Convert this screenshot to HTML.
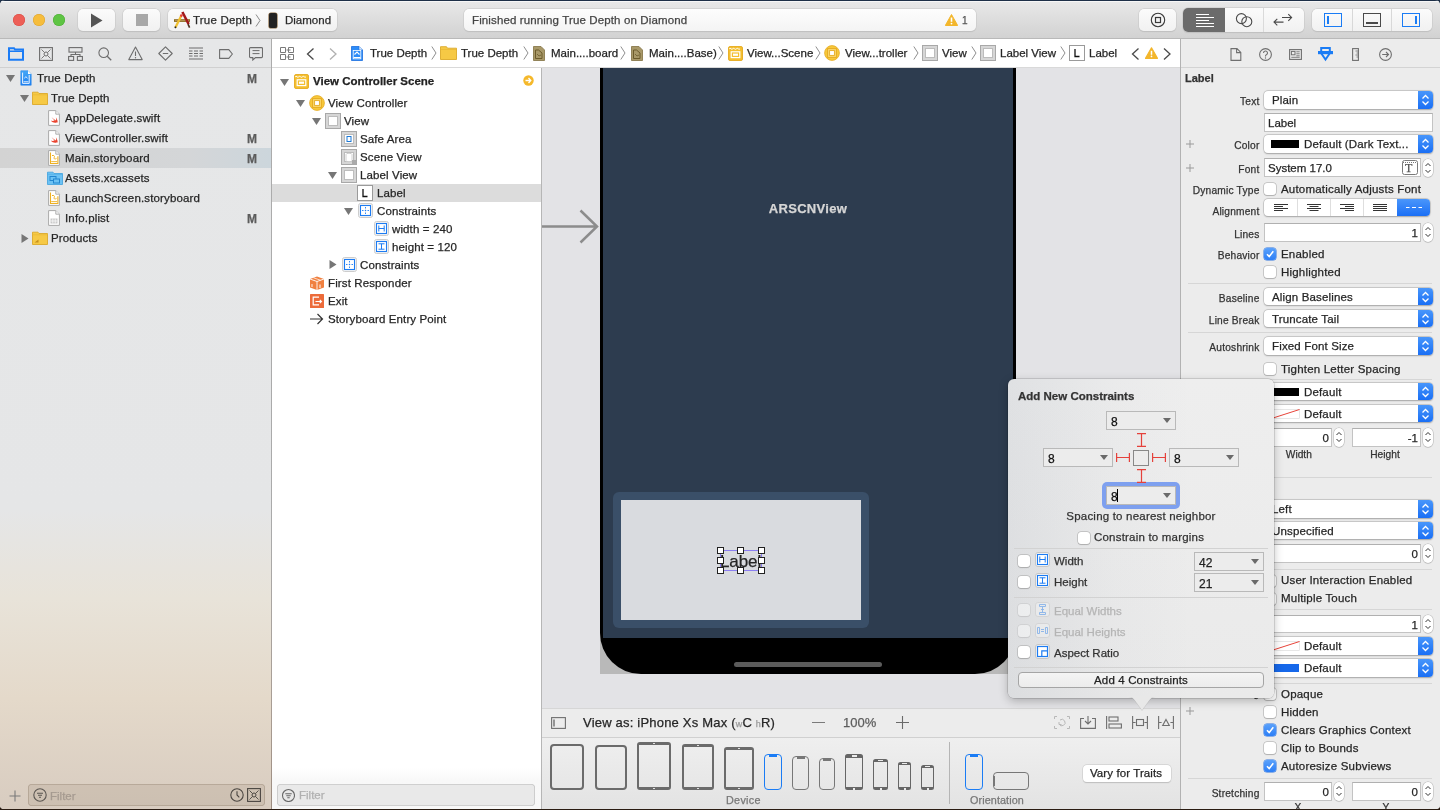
<!DOCTYPE html>
<html><head><meta charset="utf-8">
<style>
*{box-sizing:border-box;margin:0;padding:0}
html,body{width:1440px;height:810px;overflow:hidden;background:linear-gradient(#1d2f47 0,#1d2f47 20px,#2a1c12 790px);font-family:"Liberation Sans",sans-serif;font-size:12px;color:#262626}
.a{position:absolute}
#win{position:absolute;left:0;top:0;width:1440px;height:809px;will-change:transform;background:#ececec;border-radius:5px 5px 4px 4px;overflow:hidden}
#tb{position:absolute;left:0;top:1px;width:1440px;height:38px;background:linear-gradient(#e8e8e8,#d2d2d2);border-bottom:1px solid #b9b9b9;box-shadow:inset 0 1px 0 #f6f6f6}
.btn{position:absolute;background:linear-gradient(#fbfbfb,#f1f1f1);border-radius:5px;box-shadow:0 0 0 0.5px #c8c8c8,0 0.5px 1px #b8b8b8}
.tl{position:absolute;width:12px;height:12px;border-radius:50%}
#nav{position:absolute;left:0;top:39px;width:272px;height:770px;background:linear-gradient(#e6e7e8 0px,#e5e6e7 470px,#e8e3d9 560px,#e4d9ca 660px,#d8ccc0 770px)}
#navline{position:absolute;left:271px;top:0;width:1px;height:770px;background:linear-gradient(#acacac,#aaaaaa 500px,#a89c92 680px,#9c8c80 770px)}
#navbar{position:absolute;left:0;top:0;width:271px;height:29px;border-bottom:1px solid #d0d0d0}
#jump{position:absolute;left:272px;top:39px;width:908px;height:29px;background:#fff;border-bottom:1px solid #d9d9d9}
#outline{position:absolute;left:272px;top:68px;width:270px;height:741px;background:#fff;border-right:1px solid #b6b6b6}
#canvas{position:absolute;left:542px;top:68px;width:638px;height:640px;background:#e3e3e6;overflow:hidden}
#viewas{position:absolute;left:542px;top:708px;width:638px;height:29px;background:#ececec;box-shadow:inset 0 1px 0 #d6d6d6}
#devbar{position:absolute;left:542px;top:737px;width:638px;height:72px;background:#ececec;box-shadow:inset 0 1px 0 #d0d0d0}
#insp{position:absolute;left:1180px;top:39px;width:260px;height:770px;background:#ececec;box-shadow:inset 1px 0 0 #b2b2b2}
.t{position:absolute;white-space:nowrap;font-size:11.5px;line-height:14px;-webkit-text-stroke:0.25px currentColor}
</style></head><body>
<div id="win">
 <div class="a" style="left:0;top:0;width:1440px;height:1px;background:#1d2f47;z-index:5"></div>
 <div id="tb">
  <div class="tl" style="left:13px;top:13px;background:#ed5f57;box-shadow:inset 0 0 0 0.5px #d84a42"></div>
  <div class="tl" style="left:33px;top:13px;background:#f6bd3c;box-shadow:inset 0 0 0 0.5px #dba12f"></div>
  <div class="tl" style="left:53px;top:13px;background:#5ec443;box-shadow:inset 0 0 0 0.5px #4aab34"></div>
  <div class="btn" style="left:78px;top:8px;width:37px;height:22px"><svg class="a" style="left:12px;top:4px" width="13" height="15"><path d="M1 0.5L12.5 7.5L1 14.5Z" fill="#545454"/></svg></div>
  <div class="btn" style="left:123px;top:8px;width:37px;height:22px"><div class="a" style="left:13px;top:5px;width:12px;height:12px;background:#a8a8a8"></div></div>
  <div class="btn" style="left:168px;top:8px;width:169px;height:22px">
   <svg class="a" style="left:5px;top:2px" width="18" height="18" viewBox="0 0 18 18"><rect x="1" y="8.2" width="16" height="2.7" fill="#8d6b1d"/><path d="M2 9.5h14" stroke="#b89a5e" stroke-width="0.8"/><path d="M9.4 1L15.6 13" stroke="#a3191b" stroke-width="2.6"/><path d="M15 13.2l1.6 3.4" stroke="#4a3020" stroke-width="1.6"/><path d="M8.5 4.2L2.4 16.4" stroke="#f0c030" stroke-width="2.3"/><path d="M8.9 3.5L7.8 5.6" stroke="#e8403a" stroke-width="2.4"/><path d="M2.8 15.6L2 17" stroke="#222" stroke-width="1.6"/></svg>
   <div class="t" style="left:25px;top:4px;font-size:11.5px;color:#2b2b2b;letter-spacing:0.2px">True Depth</div>
   <svg class="a" style="left:87px;top:5px" width="6" height="13"><path d="M1 0.5L5 6.5L1 12.5" stroke="#8a8a8a" fill="none" stroke-width="1"/></svg>
   <div class="a" style="left:101px;top:4px;width:8px;height:15px;border-radius:2px;background:#222;box-shadow:0 0 0 0.6px #8a6a40"></div>
   <div class="t" style="left:117px;top:4px;font-size:11.5px;color:#2b2b2b">Diamond</div>
  </div>
  <div class="btn" style="left:464px;top:8px;width:512px;height:22px;background:linear-gradient(#fdfdfd,#f4f4f4)">
   <div class="t" style="left:8px;top:4px;font-size:11.5px;color:#444;letter-spacing:0.13px">Finished running True Depth on Diamond</div>
   <svg class="a" style="left:481px;top:5px" width="13" height="12" viewBox="0 0 13 12"><path d="M6.5 0.5L12.7 11.5H0.3Z" fill="#f3b62b" stroke="#f3b62b" stroke-linejoin="round"/><path d="M6.5 3.5v4.3" stroke="#fff" stroke-width="1.6"/><circle cx="6.5" cy="9.6" r="0.9" fill="#fff"/></svg>
   <div class="t" style="left:498px;top:5px;font-size:10px;color:#555">1</div>
  </div>
  <div class="btn" style="left:1139px;top:8px;width:37px;height:22px"><svg class="a" style="left:11px;top:3px" width="16" height="16"><circle cx="8" cy="8" r="6.7" stroke="#3a3a3a" stroke-width="1.1" fill="none"/><rect x="5.5" y="5.5" width="5" height="5" stroke="#3a3a3a" stroke-width="1.2" fill="none"/></svg></div>
  <div class="btn" style="left:1183px;top:7px;width:121px;height:24px;overflow:hidden">
   <div class="a" style="left:0;top:0;width:42px;height:24px;background:#6b6b6b"></div>
   <svg class="a" style="left:13px;top:6px" width="18" height="14"><path d="M0 0.5h13M0 3.5h18M0 6.5h13M0 9.5h18M0 12.5h18" stroke="#fff" stroke-width="1.1"/></svg>
   <svg class="a" style="left:52px;top:4px" width="18" height="17"><circle cx="6.4" cy="6.6" r="5" stroke="#4a4a4a" fill="none" stroke-width="1.1"/><circle cx="11.8" cy="9.7" r="5" stroke="#4a4a4a" fill="none" stroke-width="1.1"/></svg>
   <div class="a" style="left:80px;top:0;width:1px;height:24px;background:#dadada"></div>
   <svg class="a" style="left:90px;top:5px" width="20" height="14"><path d="M9 4.5h9.5M15.3 1.2l3.3 3.3-3.3 3.3M1 9.1h9.5M4.3 5.8L1 9.1l3.3 3.3" stroke="#4a4a4a" fill="none" stroke-width="1.1"/></svg>
  </div>
  <div class="btn" style="left:1312px;top:8px;width:120px;height:22px">
   <div class="a" style="left:40px;top:0;width:1px;height:22px;background:#d8d8d8"></div>
   <div class="a" style="left:79px;top:0;width:1px;height:22px;background:#d8d8d8"></div>
   <div class="a" style="left:12px;top:4px;width:18px;height:14px;border:1.3px solid #1a7cf5"><div class="a" style="left:2px;top:2px;width:2px;height:8px;background:#1a7cf5"></div></div>
   <div class="a" style="left:51px;top:4px;width:18px;height:14px;border:1.3px solid #4a4a4a"><div class="a" style="left:2px;bottom:2px;width:12px;height:2px;background:#4a4a4a"></div></div>
   <div class="a" style="left:90px;top:4px;width:18px;height:14px;border:1.3px solid #1a7cf5"><div class="a" style="right:2px;top:2px;width:2px;height:8px;background:#1a7cf5"></div></div>
  </div>
 </div>
 <div id="nav"><div id="navline"></div><div class="a" style="left:0;top:745px;width:271px;height:25px">
<svg class="a" style="left:9px;top:6px" width="12" height="12"><path d="M6 0.5v11M0.5 6h11" stroke="#7a7a7a" stroke-width="1.1"/></svg>
<div class="a" style="left:28px;top:0;width:237px;height:22px;border-radius:4px;background:rgba(120,95,70,0.12);box-shadow:inset 0 0 0 0.8px rgba(110,90,70,0.3)">
<svg class="a" style="left:5px;top:4px" width="14" height="14"><circle cx="7" cy="7" r="6.2" fill="none" stroke="#5a5550" stroke-width="1.1"/><path d="M4 5.3h6M5 7.3h4M6 9.3h2" stroke="#5a5550" stroke-width="1.1"/></svg>
<div class="t" style="left:22px;top:5px;font-size:11.5px;color:#a59a90">Filter</div>
<svg class="a" style="left:202px;top:4px" width="14" height="14"><circle cx="7" cy="7" r="6.2" fill="none" stroke="#4a4540" stroke-width="1.1"/><path d="M7 3.3V7l2.3 2.3" fill="none" stroke="#4a4540" stroke-width="1.1"/></svg>
<svg class="a" style="left:219px;top:4px" width="14" height="14"><rect x="0.6" y="0.6" width="12.8" height="12.8" fill="none" stroke="#4a4540" stroke-width="1.1"/><circle cx="7" cy="7" r="2" fill="none" stroke="#4a4540" stroke-width="1"/><path d="M2.5 2.5l3 3M11.5 2.5l-3 3M2.5 11.5l3-3M11.5 11.5l-3-3" stroke="#4a4540" stroke-width="0.9"/></svg>
</div></div><div id="navbar">
  <svg class="a" style="left:8px;top:8px" width="16" height="14" viewBox="0 0 16 14"><path d="M1 1.2h5l1 1.3h8v10.3H1z" fill="none" stroke="#1b7cf6" stroke-width="2"/><path d="M1.5 4.3h13" stroke="#1b7cf6" stroke-width="1.5"/></svg>
  <svg class="a" style="left:39px;top:8px" width="14" height="14" viewBox="0 0 14 14"><rect x="0.6" y="0.6" width="12.8" height="12.8" fill="none" stroke="#6d6d6d" stroke-width="1.1"/><circle cx="7" cy="7" r="2" fill="none" stroke="#6d6d6d" stroke-width="1"/><path d="M2.5 2.5l3 3M11.5 2.5l-3 3M2.5 11.5l3-3M11.5 11.5l-3-3" stroke="#6d6d6d" stroke-width="0.9"/></svg>
  <svg class="a" style="left:68px;top:8px" width="15" height="14" viewBox="0 0 15 14"><rect x="1" y="0.6" width="13" height="4.5" fill="none" stroke="#6d6d6d" stroke-width="1.1"/><rect x="0.6" y="9.5" width="5" height="3.9" fill="none" stroke="#6d6d6d" stroke-width="1.1"/><rect x="9.4" y="9.5" width="5" height="3.9" fill="none" stroke="#6d6d6d" stroke-width="1.1"/><path d="M7.5 5v2.5M3 9.5V7.5h9v2" fill="none" stroke="#6d6d6d" stroke-width="1.1"/></svg>
  <svg class="a" style="left:98px;top:8px" width="14" height="14" viewBox="0 0 14 14"><circle cx="5.7" cy="5.7" r="4.8" fill="none" stroke="#6d6d6d" stroke-width="1.1"/><path d="M9.2 9.2l4 4" stroke="#6d6d6d" stroke-width="1.3"/></svg>
  <svg class="a" style="left:128px;top:7px" width="15" height="15" viewBox="0 0 15 15"><path d="M7.5 1L14.2 13.6H0.8Z" fill="none" stroke="#6d6d6d" stroke-width="1.1" stroke-linejoin="round"/><path d="M7.5 5.5v4.5" stroke="#6d6d6d" stroke-width="1.1"/><circle cx="7.5" cy="11.7" r="0.7" fill="#6d6d6d"/></svg>
  <svg class="a" style="left:158px;top:7px" width="15" height="15" viewBox="0 0 15 15"><path d="M7.5 0.8L14.2 7.5L7.5 14.2L0.8 7.5Z" fill="none" stroke="#6d6d6d" stroke-width="1.1" stroke-linejoin="round"/><path d="M4.8 7.5h5.4" stroke="#6d6d6d" stroke-width="1.1"/></svg>
  <svg class="a" style="left:189px;top:8px" width="14" height="13" viewBox="0 0 14 13"><path d="M0 1h14M0 4h3.5M5 4h4M10.5 4h3.5M0 6.5h3.5M5 6.5h4M10.5 6.5h3.5M0 9h3.5M5 9h4M10.5 9h3.5M0 12h14" stroke="#6d6d6d" stroke-width="1.1"/></svg>
  <svg class="a" style="left:219px;top:10px" width="14" height="10" viewBox="0 0 14 10"><path d="M0.6 0.6h9.2L13.4 5L9.8 9.4H0.6Z" fill="none" stroke="#6d6d6d" stroke-width="1.1" stroke-linejoin="round"/></svg>
  <svg class="a" style="left:249px;top:8px" width="14" height="14" viewBox="0 0 14 14"><path d="M1.5 0.6h11a1 1 0 0 1 1 1v8a1 1 0 0 1-1 1H6.5L3.8 13v-2.4H1.5a1 1 0 0 1-1-1v-8a1 1 0 0 1 1-1z" fill="none" stroke="#6d6d6d" stroke-width="1.1"/><path d="M3.5 3.6h7M3.5 6.6h7" stroke="#6d6d6d" stroke-width="1"/></svg>
 </div><div class="a" style="left:0;top:-39px;width:271px;height:810px"><svg class="a" style="left:6px;top:75px" width="9" height="9"><path d="M0 0h9L4.5 7z" fill="#767676"/></svg><svg class="a" style="left:20px;top:70px" width="12" height="16" viewBox="0 0 12 16"><defs><linearGradient id="pg" x1="0" y1="0" x2="0" y2="1"><stop offset="0" stop-color="#45a8f7"/><stop offset="1" stop-color="#1a7df2"/></linearGradient></defs><path d="M0.8 0.8h7.2l3.2 3.2v11.2H0.8z" fill="url(#pg)" stroke="#2a86ea" stroke-width="0.6"/><path d="M8 0.8v3.2h3.2z" fill="#fff"/><path d="M2.6 2.6v10.8h6.6V5" fill="none" stroke="#fff" stroke-width="0.9"/><path d="M3.6 11.8h4.8" stroke="#fff" stroke-width="0.9"/><path d="M4.3 8.2l1.6-1.5 1.6 1.5" fill="none" stroke="#fff" stroke-width="0.9"/></svg><div class="t" style="left:37px;top:71px;letter-spacing:0.15px">True Depth</div><div class="t" style="left:247px;top:72px;font-weight:bold;color:#5c5c5c;font-size:12px">M</div><svg class="a" style="left:20px;top:95px" width="9" height="9"><path d="M0 0h9L4.5 7z" fill="#767676"/></svg><svg class="a" style="left:32px;top:91px" width="16" height="14" viewBox="0 0 16 14"><path d="M0.5 1.2h5.5l1 1.3h8.5v11H0.5z" fill="#f6c945" stroke="#dba92a" stroke-width="0.9"/><path d="M0.5 3.8h15" stroke="#e9b833" stroke-width="0.7"/></svg><div class="t" style="left:51px;top:91px;letter-spacing:0.15px">True Depth</div><svg class="a" style="left:48px;top:110px" width="13" height="16" viewBox="0 0 13 16"><path d="M0.6 0.6h7.2l3.6 3.6v11.2H0.6z" fill="#fff" stroke="#a9a9a9" stroke-width="1"/><path d="M7.8 0.6v3.6h3.6" fill="#f4f4f4" stroke="#a9a9a9" stroke-width="0.9"/><path d="M2.8 10.8C4.5 12.8 7.5 13.2 9 12.2L9.6 12.8C9.8 11.2 9.4 9.2 7.8 7.2C8.4 8.8 8.3 10 7.9 10.5C6.6 9.8 4.8 8.4 3.5 7.3C4.6 8.6 5.8 9.8 6.6 10.6C5.4 11 4 10.9 2.8 10.8Z" fill="#e9432f"/></svg><div class="t" style="left:65px;top:111px;letter-spacing:0.15px">AppDelegate.swift</div><svg class="a" style="left:48px;top:130px" width="13" height="16" viewBox="0 0 13 16"><path d="M0.6 0.6h7.2l3.6 3.6v11.2H0.6z" fill="#fff" stroke="#a9a9a9" stroke-width="1"/><path d="M7.8 0.6v3.6h3.6" fill="#f4f4f4" stroke="#a9a9a9" stroke-width="0.9"/><path d="M2.8 10.8C4.5 12.8 7.5 13.2 9 12.2L9.6 12.8C9.8 11.2 9.4 9.2 7.8 7.2C8.4 8.8 8.3 10 7.9 10.5C6.6 9.8 4.8 8.4 3.5 7.3C4.6 8.6 5.8 9.8 6.6 10.6C5.4 11 4 10.9 2.8 10.8Z" fill="#e9432f"/></svg><div class="t" style="left:65px;top:131px;letter-spacing:0.15px">ViewController.swift</div><div class="t" style="left:247px;top:132px;font-weight:bold;color:#5c5c5c;font-size:12px">M</div><div class="a" style="left:0;top:148px;width:271px;height:20px;background:linear-gradient(90deg,#d3d3d3,#d4d6d8 70%,#ccd6dc)"></div><svg class="a" style="left:48px;top:150px" width="13" height="16" viewBox="0 0 13 16"><path d="M0.6 0.6h7.2l3.6 3.6v11.2H0.6z" fill="#fff" stroke="#a9a9a9" stroke-width="1"/><path d="M7.8 0.6v3.6h3.6" fill="#f4f4f4" stroke="#a9a9a9" stroke-width="0.9"/><path d="M2.5 2.6v10.9h7.4V6.2" fill="none" stroke="#eeb022" stroke-width="1.1"/><path d="M3.2 11.6h6" stroke="#eeb022" stroke-width="0.9"/><path d="M4 5.6c1.6-0.8 3.2 0.6 2.2 1.9c-0.9 1.1 0.8 2.1 2.3 0.9" fill="none" stroke="#eeb022" stroke-width="1"/></svg><div class="t" style="left:65px;top:151px;letter-spacing:0.15px">Main.storyboard</div><div class="t" style="left:247px;top:152px;font-weight:bold;color:#5c5c5c;font-size:12px">M</div><svg class="a" style="left:47px;top:171px" width="16" height="14" viewBox="0 0 16 14"><path d="M0.5 1.2h5.5l1 1.3h8.5v11H0.5z" fill="#6cc2f4" stroke="#4aa6e0" stroke-width="0.9"/><path d="M0.8 3.3h14.5" stroke="#4aa6e0" stroke-width="0.6"/><rect x="3" y="5.5" width="6" height="4" fill="none" stroke="#2286cf" stroke-width="1"/><rect x="6.5" y="8" width="6" height="4" fill="#6cc2f4" stroke="#2286cf" stroke-width="1"/></svg><div class="t" style="left:65px;top:171px;letter-spacing:0.15px">Assets.xcassets</div><svg class="a" style="left:48px;top:190px" width="13" height="16" viewBox="0 0 13 16"><path d="M0.6 0.6h7.2l3.6 3.6v11.2H0.6z" fill="#fff" stroke="#a9a9a9" stroke-width="1"/><path d="M7.8 0.6v3.6h3.6" fill="#f4f4f4" stroke="#a9a9a9" stroke-width="0.9"/><path d="M2.5 2.6v10.9h7.4V6.2" fill="none" stroke="#eeb022" stroke-width="1.1"/><path d="M3.2 11.6h6" stroke="#eeb022" stroke-width="0.9"/><path d="M4 5.6c1.6-0.8 3.2 0.6 2.2 1.9c-0.9 1.1 0.8 2.1 2.3 0.9" fill="none" stroke="#eeb022" stroke-width="1"/></svg><div class="t" style="left:65px;top:191px;letter-spacing:0.15px">LaunchScreen.storyboard</div><svg class="a" style="left:48px;top:210px" width="13" height="16" viewBox="0 0 13 16"><path d="M0.6 0.6h7.2l3.6 3.6v11.2H0.6z" fill="#fff" stroke="#a9a9a9" stroke-width="1"/><path d="M7.8 0.6v3.6h3.6" fill="#f4f4f4" stroke="#a9a9a9" stroke-width="0.9"/><rect x="2.5" y="8.5" width="7" height="5" fill="#c9c9c9"/><path d="M2.5 11h7M4.8 8.5v5M7.2 8.5v5" stroke="#fff" stroke-width="0.7"/></svg><div class="t" style="left:65px;top:211px;letter-spacing:0.15px">Info.plist</div><div class="t" style="left:247px;top:212px;font-weight:bold;color:#5c5c5c;font-size:12px">M</div><svg class="a" style="left:21px;top:234px" width="8" height="9"><path d="M0.5 0v9L7.5 4.5z" fill="#767676"/></svg><svg class="a" style="left:32px;top:231px" width="16" height="14" viewBox="0 0 16 14"><path d="M0.5 1.2h5.5l1 1.3h8.5v11H0.5z" fill="#f6c945" stroke="#dba92a" stroke-width="0.9"/><path d="M0.5 3.8h15" stroke="#e9b833" stroke-width="0.7"/><path d="M2.5 11.5l4-3v3z" fill="#c4901e"/></svg><div class="t" style="left:51px;top:231px;letter-spacing:0.15px">Products</div></div></div>
 <div id="jump"><div class="a" style="left:0;top:-1px;width:908px;height:29px"><svg class="a" style="left:8px;top:9px" width="14" height="13" viewBox="0 0 14 13"><path d="M0.5 0.5h5v5h-5zM0.5 7.5h5v5h-5zM8.5 7.5h5v5h-5zM8.5 0.5h5v5h-5z" fill="none" stroke="#7a7a7a" stroke-width="1"/><path d="M6.5 3h4M10.5 10h-4" stroke="#7a7a7a" stroke-width="1"/></svg><svg class="a" style="left:34px;top:10px" width="9" height="12"><path d="M7.5 0.5L1.5 6L7.5 11.5" stroke="#4a4a4a" fill="none" stroke-width="1.3"/></svg><svg class="a" style="left:57px;top:10px" width="9" height="12"><path d="M1 0.5L7 6L1 11.5" stroke="#b0b0b0" fill="none" stroke-width="1.3"/></svg><svg class="a" style="left:79px;top:8px" width="12" height="15" viewBox="0 0 12 15"><path d="M0.5 0.5h7.5l3.5 3.5v10.5H0.5z" fill="#2d8cf8" stroke="#1a6fe0" stroke-width="0.8"/><path d="M8 0.5v3.5h3.5" fill="#e8f1fe" stroke="#1a6fe0" stroke-width="0.6"/><path d="M2.5 11.5h7M3.5 8.5l2.5-2.5 2.5 2.5" stroke="#fff" stroke-width="1.1" fill="none"/><rect x="2.2" y="4.5" width="7.6" height="8.3" fill="none" stroke="#fff" stroke-width="0.8"/></svg><div class="t" style="left:98px;top:8px;">True Depth</div><svg class="a" style="left:159px;top:8px" width="6" height="14"><path d="M0.8 0.5L5 7L0.8 13.5" stroke="#8f8f8f" fill="none" stroke-width="1"/></svg><svg class="a" style="left:168px;top:8px" width="17" height="14" viewBox="0 0 17 14"><path d="M0.5 0.7h6l1 1.5h9v11.3H0.5z" fill="#f6c945" stroke="#dba92a" stroke-width="0.9"/><path d="M0.5 3.5h16" stroke="#e9b833" stroke-width="0.7"/></svg><div class="t" style="left:189px;top:8px;">True Depth</div><svg class="a" style="left:251px;top:8px" width="6" height="14"><path d="M0.8 0.5L5 7L0.8 13.5" stroke="#8f8f8f" fill="none" stroke-width="1"/></svg><svg class="a" style="left:261px;top:8px" width="12" height="15" viewBox="0 0 12 15"><path d="M0.5 0.5h7.5l3.5 3.5v10.5H0.5z" fill="#a89868" stroke="#8a7b4e" stroke-width="0.9"/><path d="M2.5 4h3l3.5 3v5.5H2.5z" fill="none" stroke="#6b5a2a" stroke-width="1"/><path d="M4 8l2 2 2-1" fill="none" stroke="#6b5a2a" stroke-width="0.8"/></svg><div class="t" style="left:279px;top:8px;">Main....board</div><svg class="a" style="left:348px;top:8px" width="6" height="14"><path d="M0.8 0.5L5 7L0.8 13.5" stroke="#8f8f8f" fill="none" stroke-width="1"/></svg><svg class="a" style="left:359px;top:8px" width="12" height="15" viewBox="0 0 12 15"><path d="M0.5 0.5h7.5l3.5 3.5v10.5H0.5z" fill="#a89868" stroke="#8a7b4e" stroke-width="0.9"/><path d="M2.5 4h3l3.5 3v5.5H2.5z" fill="none" stroke="#6b5a2a" stroke-width="1"/><path d="M4 8l2 2 2-1" fill="none" stroke="#6b5a2a" stroke-width="0.8"/></svg><div class="t" style="left:377px;top:8px;">Main....Base)</div><svg class="a" style="left:446px;top:8px" width="6" height="14"><path d="M0.8 0.5L5 7L0.8 13.5" stroke="#8f8f8f" fill="none" stroke-width="1"/></svg><svg class="a" style="left:456px;top:8px" width="15" height="15" viewBox="0 0 15 15"><rect x="0.5" y="0.5" width="14" height="14" rx="1.5" fill="#f4bf2f" stroke="#e5aa1f" stroke-width="0.9"/><path d="M1.2 2.8q0.9-1 1.8 0t1.8 0t1.8 0t1.8 0t1.8 0t1.8 0" fill="none" stroke="#fff" stroke-width="1"/><rect x="2.6" y="5.2" width="9.8" height="7" fill="#fff"/><rect x="3.8" y="6.4" width="7.4" height="4.6" fill="#f4bf2f"/><rect x="5" y="7.6" width="5" height="2.2" fill="#fff"/></svg><div class="t" style="left:475px;top:8px;">View...Scene</div><svg class="a" style="left:543px;top:8px" width="6" height="14"><path d="M0.8 0.5L5 7L0.8 13.5" stroke="#8f8f8f" fill="none" stroke-width="1"/></svg><svg class="a" style="left:552px;top:7px" width="16" height="16" viewBox="0 0 16 16"><circle cx="8" cy="8" r="7.4" fill="#f7c83a" stroke="#e6ab22" stroke-width="0.8"/><rect x="3.6" y="3.6" width="8.8" height="8.8" fill="#fbd971" stroke="#e6ab22" stroke-width="1"/><rect x="5.6" y="5.6" width="4.8" height="4.8" fill="#fff" stroke="#e6ab22" stroke-width="0.9"/></svg><div class="t" style="left:573px;top:8px;">View...troller</div><svg class="a" style="left:641px;top:8px" width="6" height="14"><path d="M0.8 0.5L5 7L0.8 13.5" stroke="#8f8f8f" fill="none" stroke-width="1"/></svg><svg class="a" style="left:650px;top:7px" width="16" height="16" viewBox="0 0 16 16"><rect x="0.5" y="0.5" width="15" height="15" fill="#d6d6d6" stroke="#a8a8a8" stroke-width="1"/><rect x="3.5" y="3.5" width="9" height="9" fill="#fff" stroke="#bcbcbc" stroke-width="1"/></svg><div class="t" style="left:670px;top:8px;">View</div><svg class="a" style="left:699px;top:8px" width="6" height="14"><path d="M0.8 0.5L5 7L0.8 13.5" stroke="#8f8f8f" fill="none" stroke-width="1"/></svg><svg class="a" style="left:708px;top:7px" width="16" height="16" viewBox="0 0 16 16"><rect x="0.5" y="0.5" width="15" height="15" fill="#d6d6d6" stroke="#a8a8a8" stroke-width="1"/><rect x="3.5" y="3.5" width="9" height="9" fill="#fff" stroke="#bcbcbc" stroke-width="1"/></svg><div class="t" style="left:728px;top:8px;">Label View</div><svg class="a" style="left:788px;top:8px" width="6" height="14"><path d="M0.8 0.5L5 7L0.8 13.5" stroke="#8f8f8f" fill="none" stroke-width="1"/></svg><svg class="a" style="left:797px;top:7px" width="16" height="16" viewBox="0 0 16 16"><rect x="0.5" y="0.5" width="15" height="15" fill="#fff" stroke="#9a9a9a" stroke-width="1"/><path d="M6 4v7.5h4.5" fill="none" stroke="#111" stroke-width="1.3"/></svg><div class="t" style="left:817px;top:8px;">Label</div><svg class="a" style="left:859px;top:10px" width="9" height="12"><path d="M7.5 0.5L1.5 6L7.5 11.5" stroke="#4a4a4a" fill="none" stroke-width="1.3"/></svg><svg class="a" style="left:873px;top:9px" width="13" height="12" viewBox="0 0 13 12"><path d="M6.5 0.8L12.5 11.3H0.5Z" fill="#f3b62b" stroke="#f3b62b" stroke-linejoin="round" stroke-width="1.2"/><path d="M6.5 3.8v4" stroke="#fff" stroke-width="1.5"/><circle cx="6.5" cy="9.4" r="0.85" fill="#fff"/></svg><svg class="a" style="left:891px;top:10px" width="9" height="12"><path d="M1 0.5L7 6L1 11.5" stroke="#4a4a4a" fill="none" stroke-width="1.3"/></svg></div></div>
 <div id="outline"><div class="a" style="left:0px;top:-1px;width:270px;height:742px"><div class="a" style="left:0;top:701px;width:269px;height:42px;background:linear-gradient(#fff,#f8f8f8 30%,#f7f7f7)"></div>
<div class="a" style="left:5px;top:717px;width:258px;height:22px;border-radius:4px;background:#e9e9e9;box-shadow:inset 0 0 0 0.8px #c6c6c6">
<svg class="a" style="left:4px;top:4px" width="14" height="14"><circle cx="7.5" cy="7.5" r="6" fill="none" stroke="#666" stroke-width="1.1"/><path d="M4.3 5.8h6.4M5.3 7.8h4.4M6.3 9.8h2.4" stroke="#666" stroke-width="1.1"/></svg>
<div class="t" style="left:22px;top:4px;font-size:11.5px;color:#b0b0b0">Filter</div></div><svg class="a" style="left:8px;top:11px" width="9" height="9"><path d="M0 1h9L4.5 8z" fill="#767676"/></svg><svg class="a" style="left:22px;top:7px" width="15" height="15" viewBox="0 0 15 15"><rect x="0.5" y="0.5" width="14" height="14" rx="1.5" fill="#f4bf2f" stroke="#e5aa1f" stroke-width="0.9"/><path d="M1.2 2.8q0.9-1 1.8 0t1.8 0t1.8 0t1.8 0t1.8 0t1.8 0" fill="none" stroke="#fff" stroke-width="1"/><rect x="2.6" y="5.2" width="9.8" height="7" fill="#fff"/><rect x="3.8" y="6.4" width="7.4" height="4.6" fill="#f4bf2f"/><rect x="5" y="7.6" width="5" height="2.2" fill="#fff"/></svg><div class="t" style="left:41px;top:7px;letter-spacing:-0.1px;font-weight:bold;letter-spacing:0px;color:#222">View Controller Scene</div><svg class="a" style="left:251px;top:8px" width="11" height="11" viewBox="0 0 11 11"><circle cx="5.5" cy="5.5" r="5.2" fill="#f5b82a"/><path d="M2.5 5.5h5M5.5 3l2.3 2.5L5.5 8" stroke="#fff" stroke-width="1.3" fill="none"/></svg><svg class="a" style="left:24px;top:32px" width="9" height="9"><path d="M0 1h9L4.5 8z" fill="#767676"/></svg><svg class="a" style="left:37px;top:28px" width="16" height="16" viewBox="0 0 16 16"><circle cx="8" cy="8" r="7.4" fill="#f7c83a" stroke="#e6ab22" stroke-width="0.8"/><rect x="3.6" y="3.6" width="8.8" height="8.8" fill="#fbd971" stroke="#e6ab22" stroke-width="1"/><rect x="5.6" y="5.6" width="4.8" height="4.8" fill="#fff" stroke="#e6ab22" stroke-width="0.9"/></svg><div class="t" style="left:56px;top:29px;letter-spacing:0.12px">View Controller</div><svg class="a" style="left:40px;top:50px" width="9" height="9"><path d="M0 1h9L4.5 8z" fill="#767676"/></svg><svg class="a" style="left:53px;top:46px" width="16" height="16" viewBox="0 0 16 16"><rect x="0.5" y="0.5" width="15" height="15" fill="#d6d6d6" stroke="#a8a8a8" stroke-width="1"/><rect x="3.5" y="3.5" width="9" height="9" fill="#fff" stroke="#bcbcbc" stroke-width="1"/></svg><div class="t" style="left:72px;top:47px;letter-spacing:0.12px">View</div><svg class="a" style="left:69px;top:64px" width="16" height="16" viewBox="0 0 16 16"><rect x="0.5" y="0.5" width="15" height="15" fill="#d6d6d6" stroke="#a8a8a8" stroke-width="1"/><rect x="3.5" y="3.5" width="9" height="9" fill="#fff" stroke="#bcbcbc" stroke-width="1"/><rect x="6" y="5.5" width="4" height="5" fill="none" stroke="#1a78d6" stroke-width="1"/></svg><div class="t" style="left:88px;top:65px;letter-spacing:0.12px">Safe Area</div><svg class="a" style="left:69px;top:82px" width="16" height="16" viewBox="0 0 16 16"><rect x="0.5" y="0.5" width="15" height="15" fill="#d6d6d6" stroke="#a8a8a8" stroke-width="1"/><rect x="3.5" y="3.5" width="9" height="9" fill="#fff" stroke="#bcbcbc" stroke-width="1"/><path d="M5 5.5a3 1.2 0 0 1 6 0v6a3 1.2 0 0 1-6 0z" fill="#fff" stroke="#c4c4c4" stroke-width="0.8"/><rect x="11" y="11" width="4" height="4" fill="#aaa"/></svg><div class="t" style="left:88px;top:83px;letter-spacing:0.12px">Scene View</div><svg class="a" style="left:56px;top:104px" width="9" height="9"><path d="M0 1h9L4.5 8z" fill="#767676"/></svg><svg class="a" style="left:69px;top:100px" width="16" height="16" viewBox="0 0 16 16"><rect x="0.5" y="0.5" width="15" height="15" fill="#d6d6d6" stroke="#a8a8a8" stroke-width="1"/><rect x="3.5" y="3.5" width="9" height="9" fill="#fff" stroke="#bcbcbc" stroke-width="1"/></svg><div class="t" style="left:88px;top:101px;letter-spacing:0.12px">Label View</div><div class="a" style="left:0;top:117px;width:269px;height:18px;background:#dcdcdc"></div><svg class="a" style="left:85px;top:118px" width="16" height="16" viewBox="0 0 16 16"><rect x="0.5" y="0.5" width="15" height="15" fill="#fff" stroke="#9a9a9a" stroke-width="1"/><path d="M6 4v7.5h4.5" fill="none" stroke="#111" stroke-width="1.3"/></svg><div class="t" style="left:105px;top:119px;letter-spacing:0.12px">Label</div><svg class="a" style="left:72px;top:140px" width="9" height="9"><path d="M0 1h9L4.5 8z" fill="#767676"/></svg><svg class="a" style="left:86px;top:136px" width="15" height="15" viewBox="0 0 15 15"><rect x="0.5" y="0.5" width="14" height="14" rx="2" fill="#f4f4f4" stroke="#c8c8c8" stroke-width="0.9"/><rect x="2.5" y="2.5" width="10" height="10" fill="#fff" stroke="#1d7cf2" stroke-width="1.1"/><path d="M7.5 4v1.5M7.5 6.8v1.4M7.5 9.5v1.5M4 7.5h1.5M6.8 7.5h1.4M9.5 7.5h1.5" stroke="#1d7cf2" stroke-width="0.9"/></svg><div class="t" style="left:105px;top:137px;letter-spacing:0.12px">Constraints</div><svg class="a" style="left:102px;top:154px" width="15" height="15" viewBox="0 0 15 15"><rect x="0.5" y="0.5" width="14" height="14" rx="2" fill="#f4f4f4" stroke="#c8c8c8" stroke-width="0.9"/><rect x="2.5" y="2.5" width="10" height="10" fill="#fff" stroke="#1d7cf2" stroke-width="1.1"/><path d="M4.8 4.5v6M10.2 4.5v6M4.8 7.5h5.4" stroke="#1d7cf2" stroke-width="1"/></svg><div class="t" style="left:120px;top:155px;letter-spacing:0.12px">width = 240</div><svg class="a" style="left:102px;top:172px" width="15" height="15" viewBox="0 0 15 15"><rect x="0.5" y="0.5" width="14" height="14" rx="2" fill="#f4f4f4" stroke="#c8c8c8" stroke-width="0.9"/><rect x="2.5" y="2.5" width="10" height="10" fill="#fff" stroke="#1d7cf2" stroke-width="1.1"/><path d="M4.5 4.8h6M4.5 10.2h6M7.5 4.8v5.4" stroke="#1d7cf2" stroke-width="1"/></svg><div class="t" style="left:120px;top:173px;letter-spacing:0.12px">height = 120</div><svg class="a" style="left:57px;top:193px" width="8" height="9"><path d="M0.5 0v9L7.5 4.5z" fill="#767676"/></svg><svg class="a" style="left:70px;top:190px" width="15" height="15" viewBox="0 0 15 15"><rect x="0.5" y="0.5" width="14" height="14" rx="2" fill="#f4f4f4" stroke="#c8c8c8" stroke-width="0.9"/><rect x="2.5" y="2.5" width="10" height="10" fill="#fff" stroke="#1d7cf2" stroke-width="1.1"/><path d="M7.5 4v1.5M7.5 6.8v1.4M7.5 9.5v1.5M4 7.5h1.5M6.8 7.5h1.4M9.5 7.5h1.5" stroke="#1d7cf2" stroke-width="0.9"/></svg><div class="t" style="left:88px;top:191px;letter-spacing:0.12px">Constraints</div><svg class="a" style="left:37px;top:208px" width="16" height="16" viewBox="0 0 16 16"><path d="M1 4L8 1.5L15 4V12.5L8 15L1 12.5Z" fill="#f08040"/><path d="M1 4L8 6.5L15 4M8 6.5V15" stroke="#fff" stroke-width="0.9" fill="none"/><path d="M4.5 2.8L11.5 5.2" stroke="#fff" stroke-width="0.7"/><path d="M11 9.5v3.5" stroke="#fff" stroke-width="1"/><path d="M3 9v3" stroke="#fff" stroke-width="0.9"/></svg><div class="t" style="left:56px;top:209px;letter-spacing:0.12px">First Responder</div><svg class="a" style="left:37px;top:226px" width="16" height="16" viewBox="0 0 16 16"><rect x="1" y="1" width="14" height="14" rx="0.5" fill="#ec6b3a"/><path d="M10 4.2H4.2v7.6H10" stroke="#fff" stroke-width="1.2" fill="none"/><path d="M6.5 8.5h5.5M10.8 6.8l1.7 1.7-1.7 1.7" stroke="#fff" stroke-width="1.1" fill="none"/></svg><div class="t" style="left:56px;top:227px;letter-spacing:0.12px">Exit</div><svg class="a" style="left:38px;top:246px" width="14" height="12"><path d="M0 6h12.5M7.5 1l5 5-5 5" stroke="#333" stroke-width="1.2" fill="none"/></svg><div class="t" style="left:56px;top:245px;letter-spacing:0.12px">Storyboard Entry Point</div></div></div>
 <div id="canvas"><div class="a" style="left:-1px;top:-1px;width:639px;height:641px">
 <div class="a" style="left:0;top:0;width:639px;height:1px;background:#dedede"></div>
 <div class="a" style="left:59px;top:0;width:416px;height:607px;background:#b9b9b9"></div>
 <div class="a" style="left:59px;top:-5px;width:416px;height:612px;background:#000;border-radius:0 0 41px 41px"></div>
 <div class="a" style="left:62px;top:0;width:410px;height:571px;background:#2d3c4f"></div>
 <div class="a" style="left:193px;top:595px;width:148px;height:5px;border-radius:3px;background:#5b5b5b"></div>
 <div class="t" style="left:62px;top:134px;width:410px;text-align:center;font-weight:bold;font-size:13px;line-height:16px;color:#d6d6d6;letter-spacing:0.3px">ARSCNView</div>
 <div class="a" style="left:72px;top:425px;width:256px;height:136px;background:#3a4f68;border-radius:6px"></div>
 <div class="a" style="left:80px;top:433px;width:240px;height:120px;background:#d9dbdf"></div>
 <div class="t" style="left:179px;top:485px;font-size:17px;line-height:20px;color:#262626;letter-spacing:-0.1px">Label</div>
 <div class="a" style="left:179px;top:483px;width:42px;height:21px;border:1px solid #8a7ef0"></div>
 <svg class="a" style="left:176px;top:480px" width="49" height="27"><g fill="#fff" stroke="#222" stroke-width="1"><rect x="0.5" y="0.5" width="6" height="6"/><rect x="20.5" y="0.5" width="6" height="6"/><rect x="41.5" y="0.5" width="6" height="6"/><rect x="0.5" y="10.5" width="6" height="6"/><rect x="41.5" y="10.5" width="6" height="6"/><rect x="0.5" y="20.5" width="6" height="6"/><rect x="20.5" y="20.5" width="6" height="6"/><rect x="41.5" y="20.5" width="6" height="6"/></g></svg>
 <svg class="a" style="left:1px;top:138px" width="58" height="44"><path d="M0 21.5h55M38.5 5.5L55 21.5L38.5 37.5" stroke="#8c8c8c" stroke-width="2.5" fill="none"/></svg>
</div></div>
 <div id="viewas"><div class="a" style="left:-1px;top:-1px;width:639px;height:30px">
<svg class="a" style="left:10px;top:10px" width="15" height="12"><rect x="0.6" y="0.6" width="13.8" height="10.8" fill="none" stroke="#6f6f6f" stroke-width="1.1"/><path d="M3 2.5v7" stroke="#6f6f6f" stroke-width="1.4"/></svg>
<div class="t" style="left:42px;top:8px;font-size:13px;line-height:15px;color:#262626;letter-spacing:0.2px">View as: iPhone Xs Max (<span style="font-size:9px;color:#9a9a9a">w</span>C <span style="font-size:9px;color:#9a9a9a">h</span>R)</div>
<div class="a" style="left:271px;top:15px;width:13px;height:1px;background:#7a7a7a"></div>
<div class="t" style="left:302px;top:8px;font-size:13px;line-height:15px;color:#5e5e5e">100%</div>
<svg class="a" style="left:355px;top:9px" width="13" height="13"><path d="M6.5 0v13M0 6.5h13" stroke="#6a6a6a" stroke-width="1.1"/></svg>
<svg class="a" style="left:513px;top:9px" width="16" height="13" viewBox="0 0 16 13"><path d="M0.5 3V0.5H3M13 0.5h2.5V3M15.5 10v2.5H13M3 12.5H0.5V10" fill="none" stroke="#b8b8b8" stroke-width="1"/><path d="M5 8a3.2 3.2 0 1 0 1-4" fill="none" stroke="#b8b8b8" stroke-width="1"/><path d="M5 6v2.5h2.5" fill="none" stroke="#b8b8b8" stroke-width="1"/></svg>
<svg class="a" style="left:539px;top:9px" width="16" height="13" viewBox="0 0 16 13"><path d="M4 2.5H0.6v9.9h14.8V2.5H12" fill="none" stroke="#6f6f6f" stroke-width="1.1"/><path d="M8 0v8M5 5l3 3 3-3" fill="none" stroke="#6f6f6f" stroke-width="1.1"/></svg>
<svg class="a" style="left:565px;top:9px" width="16" height="13" viewBox="0 0 16 13"><path d="M0.6 0v13" stroke="#6f6f6f" stroke-width="1.1"/><rect x="3" y="1" width="9" height="4" fill="none" stroke="#6f6f6f" stroke-width="1.1"/><rect x="3" y="8" width="12.4" height="4" fill="none" stroke="#6f6f6f" stroke-width="1.1"/></svg>
<svg class="a" style="left:591px;top:9px" width="16" height="13" viewBox="0 0 16 13"><path d="M0.6 0v13M15.4 0v13M0.6 6.5h3M12.4 6.5h3" stroke="#6f6f6f" stroke-width="1.1"/><rect x="4.5" y="3.5" width="7" height="6" fill="none" stroke="#6f6f6f" stroke-width="1.1"/></svg>
<svg class="a" style="left:617px;top:9px" width="16" height="13" viewBox="0 0 16 13"><path d="M0.6 0v13M15.4 0v13M0.6 6.5h3M12.4 6.5h3" stroke="#6f6f6f" stroke-width="1.1"/><path d="M8 3.5l3.3 6H4.7z" fill="none" stroke="#6f6f6f" stroke-width="1.1"/></svg>
</div></div>
 <div id="devbar" style="background:linear-gradient(#efefef,#e3e3e3)"><div class="a" style="left:-1px;top:-1px;width:639px;height:73px">
<div class="a" style="left:9px;top:8px;width:34px;height:46px;border:2px solid #6b6b6b;border-radius:4px"></div>
<div class="a" style="left:54px;top:9px;width:32px;height:45px;border:2px solid #6b6b6b;border-radius:4px"></div>
<div class="a" style="left:96px;top:6px;width:34px;height:48px;border:2px solid #6b6b6b;border-top-width:3px;border-bottom-width:3px;border-radius:3px"><div class="a" style="left:50%;top:-2.3px;width:1.6px;height:1.6px;margin-left:-0.8px;border-radius:1px;background:#f2f2f2"></div><div class="a" style="left:50%;bottom:-2.4px;width:2px;height:1.6px;margin-left:-1px;border-radius:1px;background:#f2f2f2"></div></div>
<div class="a" style="left:141px;top:8px;width:32px;height:46px;border:2px solid #6b6b6b;border-top-width:3px;border-bottom-width:3px;border-radius:3px"><div class="a" style="left:50%;top:-2.3px;width:1.6px;height:1.6px;margin-left:-0.8px;border-radius:1px;background:#f2f2f2"></div><div class="a" style="left:50%;bottom:-2.4px;width:2px;height:1.6px;margin-left:-1px;border-radius:1px;background:#f2f2f2"></div></div>
<div class="a" style="left:183px;top:11px;width:30px;height:43px;border:2px solid #6b6b6b;border-top-width:3px;border-bottom-width:3px;border-radius:3px"><div class="a" style="left:50%;top:-2.3px;width:1.6px;height:1.6px;margin-left:-0.8px;border-radius:1px;background:#f2f2f2"></div><div class="a" style="left:50%;bottom:-2.4px;width:2px;height:1.6px;margin-left:-1px;border-radius:1px;background:#f2f2f2"></div></div>
<div class="a" style="left:223px;top:18px;width:18px;height:36px;border:1.4px solid #1a7cf5;border-radius:4px"><div class="a" style="left:50%;top:0;width:8px;height:2px;margin-left:-4px;background:#1a7cf5"></div></div>
<div class="a" style="left:251px;top:20px;width:17px;height:34px;border:1.1px solid #777;border-radius:4px"><div class="a" style="left:50%;top:0;width:8px;height:2px;margin-left:-4px;background:#777"></div></div>
<div class="a" style="left:278px;top:22px;width:16px;height:32px;border:1.1px solid #777;border-radius:4px"><div class="a" style="left:50%;top:0;width:8px;height:2px;margin-left:-4px;background:#777"></div></div>
<div class="a" style="left:304px;top:18px;width:18px;height:36px;border:1.5px solid #666;border-top-width:4px;border-bottom-width:3.5px;border-radius:2.5px"><div class="a" style="left:50%;top:-2.7px;width:5px;height:1.4px;margin-left:-2.5px;background:#ececec"></div><div class="a" style="left:50%;bottom:-2.75px;width:2px;height:2px;margin-left:-1px;background:#ececec"></div></div>
<div class="a" style="left:332px;top:23px;width:15px;height:31px;border:1.5px solid #666;border-top-width:3px;border-bottom-width:3px;border-radius:2.5px"><div class="a" style="left:50%;top:-2.2px;width:5px;height:1.4px;margin-left:-2.5px;background:#ececec"></div><div class="a" style="left:50%;bottom:-2.5px;width:2px;height:2px;margin-left:-1px;background:#ececec"></div></div>
<div class="a" style="left:357px;top:26px;width:13px;height:28px;border:1.5px solid #666;border-top-width:3px;border-bottom-width:3px;border-radius:2.5px"><div class="a" style="left:50%;top:-2.2px;width:5px;height:1.4px;margin-left:-2.5px;background:#ececec"></div><div class="a" style="left:50%;bottom:-2.5px;width:2px;height:2px;margin-left:-1px;background:#ececec"></div></div>
<div class="a" style="left:380px;top:29px;width:13px;height:25px;border:1.5px solid #666;border-top-width:3px;border-bottom-width:3px;border-radius:2.5px"><div class="a" style="left:50%;top:-2.2px;width:5px;height:1.4px;margin-left:-2.5px;background:#ececec"></div><div class="a" style="left:50%;bottom:-2.5px;width:2px;height:2px;margin-left:-1px;background:#ececec"></div></div>
<div class="t" style="left:185px;top:57px;font-size:10.8px;color:#777;letter-spacing:0.3px">Device</div>
<div class="a" style="left:408px;top:6px;width:1px;height:62px;background:#b5b5b5"></div>
<div class="a" style="left:424px;top:18px;width:18px;height:36px;border:1.4px solid #1a7cf5;border-radius:4px"><div class="a" style="left:50%;top:0;width:8px;height:2px;margin-left:-4px;background:#1a7cf5"></div></div>
<div class="a" style="left:452px;top:36px;width:36px;height:18px;border:1.1px solid #777;border-radius:4px"></div>
<div class="a" style="left:452px;top:40px;width:2px;height:10px;background:#777"></div>
<div class="t" style="left:429px;top:57px;font-size:10.8px;color:#777;letter-spacing:0.1px">Orientation</div>
<div class="btn" style="left:542px;top:29px;width:88px;height:17px;background:#fff;border-radius:4px"><div class="t" style="left:-1px;width:88px;text-align:center;top:1px;font-size:11.5px;color:#262626;letter-spacing:0.1px">Vary for Traits</div></div>
</div></div>
 <div id="insp"><div class="a" style="left:1px;top:28px;width:259px;height:1px;background:#d3d3d3"></div>
<svg class="a" style="left:50px;top:9px" width="12" height="13" viewBox="0 0 12 13"><path d="M1 0.6h6l3.8 3.8v8H1z M6.6 0.6v4h4.2" fill="none" stroke="#6f6f6f" stroke-width="1.1"/></svg>
<svg class="a" style="left:79px;top:9px" width="13" height="13" viewBox="0 0 13 13"><circle cx="6.5" cy="6.5" r="5.9" fill="none" stroke="#6f6f6f" stroke-width="1.1"/><path d="M4.5 5a2 2 0 1 1 2.9 1.8c-0.6 0.3-0.9 0.6-0.9 1.3v0.4" fill="none" stroke="#6f6f6f" stroke-width="1.1"/><circle cx="6.5" cy="10" r="0.65" fill="#6f6f6f"/></svg>
<svg class="a" style="left:109px;top:10px" width="13" height="11" viewBox="0 0 13 11"><rect x="0.6" y="0.6" width="11.8" height="9.8" fill="none" stroke="#6f6f6f" stroke-width="1.1"/><rect x="2.4" y="2.4" width="3.6" height="3.4" fill="none" stroke="#6f6f6f" stroke-width="1"/><path d="M7.3 2.8h3.4M7.3 4.8h3.4M7.3 6.8h3.4M2.3 8.3h8.4" stroke="#6f6f6f" stroke-width="0.9"/></svg>
<svg class="a" style="left:138px;top:8px" width="15" height="15" viewBox="0 0 15 15"><path d="M3.2 1.1h8.6v5.2L7.5 12.6L3.2 6.3z" fill="none" stroke="#1a7cf5" stroke-width="2"/><rect x="0" y="4" width="15" height="3.2" fill="#1a7cf5"/></svg>
<svg class="a" style="left:172px;top:9px" width="7" height="13" viewBox="0 0 7 13"><rect x="0.6" y="0.6" width="5.8" height="11.8" fill="none" stroke="#6f6f6f" stroke-width="1.1"/><path d="M3.5 3h3M4.5 5h2M3.5 7h3M4.5 9h2" stroke="#6f6f6f" stroke-width="0.8"/></svg>
<svg class="a" style="left:199px;top:9px" width="13" height="13" viewBox="0 0 13 13"><circle cx="6.5" cy="6.5" r="5.9" fill="none" stroke="#6f6f6f" stroke-width="1.1"/><path d="M3.2 6.5h6.2M7 4l2.5 2.5L7 9" fill="none" stroke="#6f6f6f" stroke-width="1.1"/></svg><div class="t" style="left:5px;top:32px;font-weight:bold;font-size:11px;color:#333">Label</div><div class="t" style="left:-70.5px;width:150px;text-align:right;top:56px;font-size:10.2px;color:#333;letter-spacing:0.2px;">Text</div><div class="a" style="left:84px;top:52px;width:169px;height:18px;background:#fff;border-radius:4px;box-shadow:0 0 0 0.5px #b0b0b0,0 0.5px 1.5px rgba(0,0,0,0.3);overflow:hidden"><div class="t" style="left:8px;top:2px;font-size:11.5px;color:#262626;letter-spacing:0.15px">Plain</div><div class="a" style="right:0;top:0;width:15px;height:18px;background:linear-gradient(#4896fb,#1a6ff5)"><svg class="a" style="left:3px;top:3px" width="9" height="12" viewBox="0 0 9 12"><path d="M1.5 4.5L4.5 1.5 7.5 4.5M1.5 7.5L4.5 10.5 7.5 7.5" fill="none" stroke="#fff" stroke-width="1.3"/></svg></div></div><div class="a" style="left:84px;top:74px;width:169px;height:19px;background:#fff;border:1px solid #c3c3c3;border-top-color:#b0b0b0"><div class="t" style="left:3px;top:2px;font-size:11.5px;color:#262626">Label</div></div><svg class="a" style="left:6px;top:101px" width="8" height="8"><path d="M4 0v8M0 4h8" stroke="#9a9a9a" stroke-width="1"/></svg><div class="t" style="left:-70.5px;width:150px;text-align:right;top:100px;font-size:10.2px;color:#333;letter-spacing:0.2px;">Color</div><div class="a" style="left:84px;top:96px;width:169px;height:18px;background:#fff;border-radius:4px;box-shadow:0 0 0 0.5px #b0b0b0,0 0.5px 1.5px rgba(0,0,0,0.3);overflow:hidden"><div class="a" style="left:7px;top:5px;width:28px;height:8px;background:#000"></div><div class="t" style="left:40px;top:2px;font-size:11.5px;color:#262626;letter-spacing:0.15px">Default (Dark Text...</div><div class="a" style="right:0;top:0;width:15px;height:18px;background:linear-gradient(#4896fb,#1a6ff5)"><svg class="a" style="left:3px;top:3px" width="9" height="12" viewBox="0 0 9 12"><path d="M1.5 4.5L4.5 1.5 7.5 4.5M1.5 7.5L4.5 10.5 7.5 7.5" fill="none" stroke="#fff" stroke-width="1.3"/></svg></div></div><svg class="a" style="left:6px;top:125px" width="8" height="8"><path d="M4 0v8M0 4h8" stroke="#9a9a9a" stroke-width="1"/></svg><div class="t" style="left:-70.5px;width:150px;text-align:right;top:124px;font-size:10.2px;color:#333;letter-spacing:0.2px;">Font</div><div class="a" style="left:84px;top:119px;width:157px;height:19px;background:#fff;border:1px solid #c3c3c3;border-top-color:#b0b0b0"><div class="t" style="left:3px;top:2px;font-size:11.5px;color:#262626">System 17.0</div></div><div class="a" style="left:222px;top:121px;width:16px;height:15px;border:1.5px solid #7a7a7a;border-radius:2.5px;background:#fff"><div class="a" style="left:0;top:0;width:13px;height:2px;border-bottom:1px dotted #7a7a7a"></div><div class="t" style="left:2px;top:1px;font-family:'Liberation Serif',serif;font-size:12px;line-height:12px;color:#555">T</div></div><div class="a" style="left:243px;top:120px;width:10px;height:18px;background:#fff;border-radius:5px;box-shadow:0 0 0 0.5px #b5b5b5,0 0.5px 1px rgba(0,0,0,0.2)"><svg class="a" style="left:1px;top:2px" width="8" height="14" viewBox="0 0 8 14"><path d="M1.5 5L4 2.5 6.5 5M1.5 9L4 11.5 6.5 9" fill="none" stroke="#333" stroke-width="1"/></svg></div><div class="t" style="left:-70.5px;width:150px;text-align:right;top:145px;font-size:10.2px;color:#333;letter-spacing:0.2px;">Dynamic Type</div><div class="a" style="left:84px;top:144px;width:12px;height:12px;border-radius:3px;background:#fff;box-shadow:0 0 0 0.5px #a8a8a8,0 0.5px 1px rgba(0,0,0,0.2)"></div><div class="t" style="left:101px;top:143px;font-size:11.5px;color:#262626;letter-spacing:0.2px;">Automatically Adjusts Font</div><div class="t" style="left:-70.5px;width:150px;text-align:right;top:166px;font-size:10.2px;color:#333;letter-spacing:0.2px;">Alignment</div><div class="a" style="left:84px;top:160px;width:166px;height:17px;background:#fff;border-radius:4px;box-shadow:0 0 0 0.5px #b0b0b0,0 0.5px 1.5px rgba(0,0,0,0.3);overflow:hidden">
<div class="a" style="left:33px;top:0;width:1px;height:17px;background:#dedede"></div><div class="a" style="left:66px;top:0;width:1px;height:17px;background:#dedede"></div><div class="a" style="left:99px;top:0;width:1px;height:17px;background:#dedede"></div>
<svg class="a" style="left:10px;top:5px" width="14" height="8"><path d="M0 0.5h14M0 2.5h9M0 4.5h14M0 6.5h9" stroke="#333" stroke-width="1"/></svg>
<svg class="a" style="left:43px;top:5px" width="14" height="8"><path d="M0 0.5h14M2.5 2.5h9M0 4.5h14M2.5 6.5h9" stroke="#333" stroke-width="1"/></svg>
<svg class="a" style="left:76px;top:5px" width="14" height="8"><path d="M0 0.5h14M5 2.5h9M0 4.5h14M5 6.5h9" stroke="#333" stroke-width="1"/></svg>
<svg class="a" style="left:109px;top:5px" width="14" height="8"><path d="M0 0.5h14M0 2.5h14M0 4.5h14M0 6.5h14" stroke="#333" stroke-width="1"/></svg>
<div class="a" style="left:133px;top:0;width:33px;height:17px;background:linear-gradient(#4a96fb,#1b6ff5)"><svg class="a" style="left:9px;top:8px" width="16" height="2"><path d="M0 0.5h3.5M6 0.5h4M12.5 0.5h3.5" stroke="#fff" stroke-width="1"/></svg></div></div><div class="t" style="left:-70.5px;width:150px;text-align:right;top:189px;font-size:10.2px;color:#333;letter-spacing:0.2px;">Lines</div><div class="a" style="left:84px;top:184px;width:157px;height:19px;background:#fff;border:1px solid #c3c3c3;border-top-color:#b0b0b0"><div class="t" style="right:2px;top:2px;font-size:11.5px;color:#262626">1</div></div><div class="a" style="left:243px;top:184px;width:10px;height:19px;background:#fff;border-radius:5px;box-shadow:0 0 0 0.5px #b5b5b5,0 0.5px 1px rgba(0,0,0,0.2)"><svg class="a" style="left:1px;top:2px" width="8" height="14" viewBox="0 0 8 14"><path d="M1.5 5L4 2.5 6.5 5M1.5 9L4 11.5 6.5 9" fill="none" stroke="#333" stroke-width="1"/></svg></div><div class="t" style="left:-70.5px;width:150px;text-align:right;top:210px;font-size:10.2px;color:#333;letter-spacing:0.2px;">Behavior</div><div class="a" style="left:84px;top:209px;width:12px;height:12px;border-radius:3px;background:linear-gradient(#5aa1fb,#2c7ef6);box-shadow:0 0 0 0.5px #2a72e0"><svg class="a" style="left:1px;top:1px" width="10" height="10"><path d="M2 5.2L4.2 7.5 8.3 2.3" fill="none" stroke="#fff" stroke-width="1.6"/></svg></div><div class="t" style="left:101px;top:208px;font-size:11.5px;color:#262626;letter-spacing:0.2px;">Enabled</div><div class="a" style="left:84px;top:227px;width:12px;height:12px;border-radius:3px;background:#fff;box-shadow:0 0 0 0.5px #a8a8a8,0 0.5px 1px rgba(0,0,0,0.2)"></div><div class="t" style="left:101px;top:226px;font-size:11.5px;color:#262626;letter-spacing:0.2px;">Highlighted</div><div class="a" style="left:8px;top:244px;width:244px;height:1px;background:#d6d6d6"></div><div class="t" style="left:-70.5px;width:150px;text-align:right;top:253px;font-size:10.2px;color:#333;letter-spacing:0.2px;">Baseline</div><div class="a" style="left:84px;top:249px;width:169px;height:17px;background:#fff;border-radius:4px;box-shadow:0 0 0 0.5px #b0b0b0,0 0.5px 1.5px rgba(0,0,0,0.3);overflow:hidden"><div class="t" style="left:8px;top:2px;font-size:11.5px;color:#262626;letter-spacing:0.15px">Align Baselines</div><div class="a" style="right:0;top:0;width:15px;height:17px;background:linear-gradient(#4896fb,#1a6ff5)"><svg class="a" style="left:3px;top:3px" width="9" height="12" viewBox="0 0 9 12"><path d="M1.5 4.5L4.5 1.5 7.5 4.5M1.5 7.5L4.5 10.5 7.5 7.5" fill="none" stroke="#fff" stroke-width="1.3"/></svg></div></div><div class="t" style="left:-70.5px;width:150px;text-align:right;top:275px;font-size:10.2px;color:#333;letter-spacing:0.2px;">Line Break</div><div class="a" style="left:84px;top:271px;width:169px;height:17px;background:#fff;border-radius:4px;box-shadow:0 0 0 0.5px #b0b0b0,0 0.5px 1.5px rgba(0,0,0,0.3);overflow:hidden"><div class="t" style="left:8px;top:2px;font-size:11.5px;color:#262626;letter-spacing:0.15px">Truncate Tail</div><div class="a" style="right:0;top:0;width:15px;height:17px;background:linear-gradient(#4896fb,#1a6ff5)"><svg class="a" style="left:3px;top:3px" width="9" height="12" viewBox="0 0 9 12"><path d="M1.5 4.5L4.5 1.5 7.5 4.5M1.5 7.5L4.5 10.5 7.5 7.5" fill="none" stroke="#fff" stroke-width="1.3"/></svg></div></div><div class="a" style="left:8px;top:293px;width:244px;height:1px;background:#d6d6d6"></div><div class="t" style="left:-70.5px;width:150px;text-align:right;top:302px;font-size:10.2px;color:#333;letter-spacing:0.2px;">Autoshrink</div><div class="a" style="left:84px;top:298px;width:169px;height:18px;background:#fff;border-radius:4px;box-shadow:0 0 0 0.5px #b0b0b0,0 0.5px 1.5px rgba(0,0,0,0.3);overflow:hidden"><div class="t" style="left:8px;top:2px;font-size:11.5px;color:#262626;letter-spacing:0.15px">Fixed Font Size</div><div class="a" style="right:0;top:0;width:15px;height:18px;background:linear-gradient(#4896fb,#1a6ff5)"><svg class="a" style="left:3px;top:3px" width="9" height="12" viewBox="0 0 9 12"><path d="M1.5 4.5L4.5 1.5 7.5 4.5M1.5 7.5L4.5 10.5 7.5 7.5" fill="none" stroke="#fff" stroke-width="1.3"/></svg></div></div><div class="a" style="left:84px;top:324px;width:12px;height:12px;border-radius:3px;background:#fff;box-shadow:0 0 0 0.5px #a8a8a8,0 0.5px 1px rgba(0,0,0,0.2)"></div><div class="t" style="left:101px;top:323px;font-size:11.5px;color:#262626;letter-spacing:0.2px;">Tighten Letter Spacing</div><div class="a" style="left:8px;top:340px;width:244px;height:1px;background:#d6d6d6"></div><div class="t" style="left:-70.5px;width:150px;text-align:right;top:348px;font-size:10.2px;color:#333;letter-spacing:0.2px;">Highlighted</div><div class="a" style="left:84px;top:344px;width:169px;height:17px;background:#fff;border-radius:4px;box-shadow:0 0 0 0.5px #b0b0b0,0 0.5px 1.5px rgba(0,0,0,0.3);overflow:hidden"><div class="a" style="left:7px;top:5px;width:28px;height:8px;background:#000"></div><div class="t" style="left:40px;top:2px;font-size:11.5px;color:#262626;letter-spacing:0.15px">Default</div><div class="a" style="right:0;top:0;width:15px;height:17px;background:linear-gradient(#4896fb,#1a6ff5)"><svg class="a" style="left:3px;top:3px" width="9" height="12" viewBox="0 0 9 12"><path d="M1.5 4.5L4.5 1.5 7.5 4.5M1.5 7.5L4.5 10.5 7.5 7.5" fill="none" stroke="#fff" stroke-width="1.3"/></svg></div></div><div class="t" style="left:-70.5px;width:150px;text-align:right;top:370px;font-size:10.2px;color:#333;letter-spacing:0.2px;">Shadow</div><div class="a" style="left:84px;top:366px;width:169px;height:17px;background:#fff;border-radius:4px;box-shadow:0 0 0 0.5px #b0b0b0,0 0.5px 1.5px rgba(0,0,0,0.3);overflow:hidden"><svg class="a" style="left:7px;top:4px" width="29" height="10"><rect x="0.5" y="0.5" width="28" height="9" fill="#fff" stroke="#d8d8d8" stroke-width="0.6"/><path d="M0.5 9.5L28.5 0.5" stroke="#e8443a" stroke-width="1"/></svg><div class="t" style="left:40px;top:2px;font-size:11.5px;color:#262626;letter-spacing:0.15px">Default</div><div class="a" style="right:0;top:0;width:15px;height:17px;background:linear-gradient(#4896fb,#1a6ff5)"><svg class="a" style="left:3px;top:3px" width="9" height="12" viewBox="0 0 9 12"><path d="M1.5 4.5L4.5 1.5 7.5 4.5M1.5 7.5L4.5 10.5 7.5 7.5" fill="none" stroke="#fff" stroke-width="1.3"/></svg></div></div><div class="t" style="left:-70.5px;width:150px;text-align:right;top:394px;font-size:10.2px;color:#333;letter-spacing:0.2px;">Shadow Offset</div><div class="a" style="left:84px;top:389px;width:68px;height:19px;background:#fff;border:1px solid #c3c3c3;border-top-color:#b0b0b0"><div class="t" style="right:2px;top:2px;font-size:11.5px;color:#262626">0</div></div><div class="a" style="left:154px;top:389px;width:10px;height:19px;background:#fff;border-radius:5px;box-shadow:0 0 0 0.5px #b5b5b5,0 0.5px 1px rgba(0,0,0,0.2)"><svg class="a" style="left:1px;top:2px" width="8" height="14" viewBox="0 0 8 14"><path d="M1.5 5L4 2.5 6.5 5M1.5 9L4 11.5 6.5 9" fill="none" stroke="#333" stroke-width="1"/></svg></div><div class="a" style="left:172px;top:389px;width:69px;height:19px;background:#fff;border:1px solid #c3c3c3;border-top-color:#b0b0b0"><div class="t" style="right:2px;top:2px;font-size:11.5px;color:#262626">-1</div></div><div class="a" style="left:243px;top:389px;width:10px;height:19px;background:#fff;border-radius:5px;box-shadow:0 0 0 0.5px #b5b5b5,0 0.5px 1px rgba(0,0,0,0.2)"><svg class="a" style="left:1px;top:2px" width="8" height="14" viewBox="0 0 8 14"><path d="M1.5 5L4 2.5 6.5 5M1.5 9L4 11.5 6.5 9" fill="none" stroke="#333" stroke-width="1"/></svg></div><div class="t" style="left:88.79999999999995px;width:60px;text-align:center;top:409px;font-size:10.2px;color:#333">Width</div><div class="t" style="left:175px;width:60px;text-align:center;top:409px;font-size:10.2px;color:#333">Height</div><div class="a" style="left:8px;top:438px;width:244px;height:1px;background:#d6d6d6"></div><div class="t" style="left:5px;top:443px;font-weight:bold;font-size:11px;color:#333">View</div><div class="t" style="left:-70.5px;width:150px;text-align:right;top:465px;font-size:10.2px;color:#333;letter-spacing:0.2px;">Content Mode</div><div class="a" style="left:84px;top:461px;width:169px;height:18px;background:#fff;border-radius:4px;box-shadow:0 0 0 0.5px #b0b0b0,0 0.5px 1.5px rgba(0,0,0,0.3);overflow:hidden"><div class="t" style="left:8px;top:2px;font-size:11.5px;color:#262626;letter-spacing:0.15px">Left</div><div class="a" style="right:0;top:0;width:15px;height:18px;background:linear-gradient(#4896fb,#1a6ff5)"><svg class="a" style="left:3px;top:3px" width="9" height="12" viewBox="0 0 9 12"><path d="M1.5 4.5L4.5 1.5 7.5 4.5M1.5 7.5L4.5 10.5 7.5 7.5" fill="none" stroke="#fff" stroke-width="1.3"/></svg></div></div><div class="t" style="left:-70.5px;width:150px;text-align:right;top:487px;font-size:10.2px;color:#333;letter-spacing:0.2px;">Semantic</div><div class="a" style="left:84px;top:483px;width:169px;height:17px;background:#fff;border-radius:4px;box-shadow:0 0 0 0.5px #b0b0b0,0 0.5px 1.5px rgba(0,0,0,0.3);overflow:hidden"><div class="t" style="left:8px;top:2px;font-size:11.5px;color:#262626;letter-spacing:0.15px">Unspecified</div><div class="a" style="right:0;top:0;width:15px;height:17px;background:linear-gradient(#4896fb,#1a6ff5)"><svg class="a" style="left:3px;top:3px" width="9" height="12" viewBox="0 0 9 12"><path d="M1.5 4.5L4.5 1.5 7.5 4.5M1.5 7.5L4.5 10.5 7.5 7.5" fill="none" stroke="#fff" stroke-width="1.3"/></svg></div></div><div class="t" style="left:-70.5px;width:150px;text-align:right;top:510px;font-size:10.2px;color:#333;letter-spacing:0.2px;">Tag</div><div class="a" style="left:84px;top:505px;width:157px;height:19px;background:#fff;border:1px solid #c3c3c3;border-top-color:#b0b0b0"><div class="t" style="right:2px;top:2px;font-size:11.5px;color:#262626">0</div></div><div class="a" style="left:243px;top:505px;width:10px;height:19px;background:#fff;border-radius:5px;box-shadow:0 0 0 0.5px #b5b5b5,0 0.5px 1px rgba(0,0,0,0.2)"><svg class="a" style="left:1px;top:2px" width="8" height="14" viewBox="0 0 8 14"><path d="M1.5 5L4 2.5 6.5 5M1.5 9L4 11.5 6.5 9" fill="none" stroke="#333" stroke-width="1"/></svg></div><div class="a" style="left:8px;top:530px;width:244px;height:1px;background:#d6d6d6"></div><div class="t" style="left:-70.5px;width:150px;text-align:right;top:536px;font-size:10.2px;color:#333;letter-spacing:0.2px;">Interaction</div><div class="a" style="left:84px;top:536px;width:12px;height:12px;border-radius:3px;background:#fff;box-shadow:0 0 0 0.5px #a8a8a8,0 0.5px 1px rgba(0,0,0,0.2)"></div><div class="t" style="left:101px;top:534px;font-size:11.5px;color:#262626;letter-spacing:0.2px;">User Interaction Enabled</div><div class="a" style="left:84px;top:554px;width:12px;height:12px;border-radius:3px;background:#fff;box-shadow:0 0 0 0.5px #a8a8a8,0 0.5px 1px rgba(0,0,0,0.2)"></div><div class="t" style="left:101px;top:552px;font-size:11.5px;color:#262626;letter-spacing:0.2px;">Multiple Touch</div><div class="a" style="left:8px;top:570px;width:244px;height:1px;background:#d6d6d6"></div><div class="t" style="left:-70.5px;width:150px;text-align:right;top:580px;font-size:10.2px;color:#333;letter-spacing:0.2px;">Alpha</div><div class="a" style="left:84px;top:576px;width:157px;height:18px;background:#fff;border:1px solid #c3c3c3;border-top-color:#b0b0b0"><div class="t" style="right:2px;top:2px;font-size:11.5px;color:#262626">1</div></div><div class="a" style="left:243px;top:576px;width:10px;height:18px;background:#fff;border-radius:5px;box-shadow:0 0 0 0.5px #b5b5b5,0 0.5px 1px rgba(0,0,0,0.2)"><svg class="a" style="left:1px;top:2px" width="8" height="14" viewBox="0 0 8 14"><path d="M1.5 5L4 2.5 6.5 5M1.5 9L4 11.5 6.5 9" fill="none" stroke="#333" stroke-width="1"/></svg></div><div class="t" style="left:-70.5px;width:150px;text-align:right;top:602px;font-size:10.2px;color:#333;letter-spacing:0.2px;">Background</div><div class="a" style="left:84px;top:598px;width:169px;height:18px;background:#fff;border-radius:4px;box-shadow:0 0 0 0.5px #b0b0b0,0 0.5px 1.5px rgba(0,0,0,0.3);overflow:hidden"><svg class="a" style="left:7px;top:4px" width="29" height="10"><rect x="0.5" y="0.5" width="28" height="9" fill="#fff" stroke="#d8d8d8" stroke-width="0.6"/><path d="M0.5 9.5L28.5 0.5" stroke="#e8443a" stroke-width="1"/></svg><div class="t" style="left:40px;top:2px;font-size:11.5px;color:#262626;letter-spacing:0.15px">Default</div><div class="a" style="right:0;top:0;width:15px;height:18px;background:linear-gradient(#4896fb,#1a6ff5)"><svg class="a" style="left:3px;top:3px" width="9" height="12" viewBox="0 0 9 12"><path d="M1.5 4.5L4.5 1.5 7.5 4.5M1.5 7.5L4.5 10.5 7.5 7.5" fill="none" stroke="#fff" stroke-width="1.3"/></svg></div></div><div class="t" style="left:-70.5px;width:150px;text-align:right;top:624px;font-size:10.2px;color:#333;letter-spacing:0.2px;">Tint</div><div class="a" style="left:84px;top:620px;width:169px;height:18px;background:#fff;border-radius:4px;box-shadow:0 0 0 0.5px #b0b0b0,0 0.5px 1.5px rgba(0,0,0,0.3);overflow:hidden"><div class="a" style="left:7px;top:5px;width:28px;height:8px;background:#1668ea"></div><div class="t" style="left:40px;top:2px;font-size:11.5px;color:#262626;letter-spacing:0.15px">Default</div><div class="a" style="right:0;top:0;width:15px;height:18px;background:linear-gradient(#4896fb,#1a6ff5)"><svg class="a" style="left:3px;top:3px" width="9" height="12" viewBox="0 0 9 12"><path d="M1.5 4.5L4.5 1.5 7.5 4.5M1.5 7.5L4.5 10.5 7.5 7.5" fill="none" stroke="#fff" stroke-width="1.3"/></svg></div></div><div class="a" style="left:8px;top:644px;width:244px;height:1px;background:#d6d6d6"></div><div class="t" style="left:-70.5px;width:150px;text-align:right;top:648px;font-size:10.2px;color:#333;letter-spacing:0.2px;">Drawing</div><div class="a" style="left:84px;top:649px;width:12px;height:12px;border-radius:3px;background:#fff;box-shadow:0 0 0 0.5px #a8a8a8,0 0.5px 1px rgba(0,0,0,0.2)"></div><div class="t" style="left:101px;top:648px;font-size:11.5px;color:#262626;letter-spacing:0.2px;">Opaque</div><svg class="a" style="left:6px;top:668px" width="8" height="8"><path d="M4 0v8M0 4h8" stroke="#9a9a9a" stroke-width="1"/></svg><div class="a" style="left:84px;top:667px;width:12px;height:12px;border-radius:3px;background:#fff;box-shadow:0 0 0 0.5px #a8a8a8,0 0.5px 1px rgba(0,0,0,0.2)"></div><div class="t" style="left:101px;top:666px;font-size:11.5px;color:#262626;letter-spacing:0.2px;">Hidden</div><div class="a" style="left:84px;top:685px;width:12px;height:12px;border-radius:3px;background:linear-gradient(#5aa1fb,#2c7ef6);box-shadow:0 0 0 0.5px #2a72e0"><svg class="a" style="left:1px;top:1px" width="10" height="10"><path d="M2 5.2L4.2 7.5 8.3 2.3" fill="none" stroke="#fff" stroke-width="1.6"/></svg></div><div class="t" style="left:101px;top:684px;font-size:11.5px;color:#262626;letter-spacing:0.2px;">Clears Graphics Context</div><div class="a" style="left:84px;top:703px;width:12px;height:12px;border-radius:3px;background:#fff;box-shadow:0 0 0 0.5px #a8a8a8,0 0.5px 1px rgba(0,0,0,0.2)"></div><div class="t" style="left:101px;top:702px;font-size:11.5px;color:#262626;letter-spacing:0.2px;">Clip to Bounds</div><div class="a" style="left:84px;top:721px;width:12px;height:12px;border-radius:3px;background:linear-gradient(#5aa1fb,#2c7ef6);box-shadow:0 0 0 0.5px #2a72e0"><svg class="a" style="left:1px;top:1px" width="10" height="10"><path d="M2 5.2L4.2 7.5 8.3 2.3" fill="none" stroke="#fff" stroke-width="1.6"/></svg></div><div class="t" style="left:101px;top:720px;font-size:11.5px;color:#262626;letter-spacing:0.2px;">Autoresize Subviews</div><div class="a" style="left:8px;top:739px;width:244px;height:1px;background:#d6d6d6"></div><div class="t" style="left:-70.5px;width:150px;text-align:right;top:748px;font-size:10.2px;color:#333;letter-spacing:0.2px;">Stretching</div><div class="a" style="left:84px;top:743px;width:68px;height:19px;background:#fff;border:1px solid #c3c3c3;border-top-color:#b0b0b0"><div class="t" style="right:2px;top:2px;font-size:11.5px;color:#262626">0</div></div><div class="a" style="left:154px;top:743px;width:10px;height:19px;background:#fff;border-radius:5px;box-shadow:0 0 0 0.5px #b5b5b5,0 0.5px 1px rgba(0,0,0,0.2)"><svg class="a" style="left:1px;top:2px" width="8" height="14" viewBox="0 0 8 14"><path d="M1.5 5L4 2.5 6.5 5M1.5 9L4 11.5 6.5 9" fill="none" stroke="#333" stroke-width="1"/></svg></div><div class="a" style="left:172px;top:743px;width:69px;height:19px;background:#fff;border:1px solid #c3c3c3;border-top-color:#b0b0b0"><div class="t" style="right:2px;top:2px;font-size:11.5px;color:#262626">0</div></div><div class="a" style="left:243px;top:743px;width:10px;height:19px;background:#fff;border-radius:5px;box-shadow:0 0 0 0.5px #b5b5b5,0 0.5px 1px rgba(0,0,0,0.2)"><svg class="a" style="left:1px;top:2px" width="8" height="14" viewBox="0 0 8 14"><path d="M1.5 5L4 2.5 6.5 5M1.5 9L4 11.5 6.5 9" fill="none" stroke="#333" stroke-width="1"/></svg></div><div class="t" style="left:118px;top:762px;font-size:10.2px;color:#333;transform:translateX(-50%)">X</div><div class="t" style="left:206px;top:762px;font-size:10.2px;color:#333;transform:translateX(-50%)">Y</div></div>
<div class="a" style="left:1008px;top:379px;width:266px;height:319px;border-radius:6px;background:linear-gradient(90deg,rgba(40,60,90,0.075),rgba(40,60,90,0.02) 40%,rgba(0,0,0,0) 70%),linear-gradient(#eeeeee,#eaeaea);box-shadow:0 0 0 0.5px rgba(0,0,0,0.22),0 3px 10px rgba(0,0,0,0.25)">
<svg class="a" style="left:119px;top:317px" width="30" height="16"><path d="M0 0.5C3 0.5 5 1.5 7 3.5L15 14.5L23 3.5C25 1.5 27 0.5 30 0.5Z" fill="#e8e8e8"/><path d="M0 0.5C3 0.5 5 1.5 7 3.5L15 14.5L23 3.5C25 1.5 27 0.5 30 0.5" fill="none" stroke="rgba(0,0,0,0.12)" stroke-width="0.7"/><rect x="0" y="0" width="30" height="1.2" fill="#e8e8e8"/></svg>
<div class="t" style="left:10px;top:10px;font-weight:bold;font-size:11.5px;color:#333">Add New Constraints</div>
<div class="a" style="left:98px;top:32px;width:70px;height:19px;border:1px solid #b9b9b9;background:#ececec"><div class="t" style="left:4px;top:2px;font-size:12px;line-height:16px;color:#111">8</div><svg class="a" style="right:4px;top:6px" width="8" height="5"><path d="M0 0h8L4 5z" fill="#6a6a6a"/></svg></div>
<div class="a" style="left:35px;top:69px;width:70px;height:19px;border:1px solid #b9b9b9;background:#ececec"><div class="t" style="left:4px;top:2px;font-size:12px;line-height:16px;color:#111">8</div><svg class="a" style="right:4px;top:6px" width="8" height="5"><path d="M0 0h8L4 5z" fill="#6a6a6a"/></svg></div>
<div class="a" style="left:161px;top:69px;width:70px;height:19px;border:1px solid #b9b9b9;background:#ececec"><div class="t" style="left:4px;top:2px;font-size:12px;line-height:16px;color:#111">8</div><svg class="a" style="right:4px;top:6px" width="8" height="5"><path d="M0 0h8L4 5z" fill="#6a6a6a"/></svg></div>
<div class="a" style="left:94px;top:103px;width:78px;height:27px;border-radius:5px;background:#7ea0ef"></div>
<div class="a" style="left:98px;top:107px;width:70px;height:19px;border:1px solid #b9b9b9;background:#ececec"><div class="t" style="left:4px;top:2px;font-size:12px;line-height:16px;color:#111">8</div><svg class="a" style="right:4px;top:6px" width="8" height="5"><path d="M0 0h8L4 5z" fill="#6a6a6a"/></svg></div>
<div class="a" style="left:109px;top:110px;width:1px;height:13px;background:#000"></div>
<div class="a" style="left:125px;top:71px;width:16px;height:16px;border:1.2px solid #888;background:#ececec"></div>
<svg class="a" style="left:129px;top:54px" width="9" height="14"><path d="M0 0.6h9M0 13.4h9M4.5 0.6v12.8" stroke="#e5413b" stroke-width="1.2"/></svg>
<svg class="a" style="left:129px;top:90px" width="9" height="14"><path d="M0 0.6h9M0 13.4h9M4.5 0.6v12.8" stroke="#e5413b" stroke-width="1.2"/></svg>
<svg class="a" style="left:108px;top:74px" width="14" height="9"><path d="M0.6 0v9M13.4 0v9M0.6 4.5h12.8" stroke="#e5413b" stroke-width="1.2"/></svg>
<svg class="a" style="left:144px;top:74px" width="14" height="9"><path d="M0.6 0v9M13.4 0v9M0.6 4.5h12.8" stroke="#e5413b" stroke-width="1.2"/></svg>
<div class="t" style="left:0;width:266px;text-align:center;top:130px;font-size:11.5px;color:#333;letter-spacing:0.2px">Spacing to nearest neighbor</div>
<div class="a" style="left:70px;top:153px;width:12px;height:12px;border-radius:3px;background:#fff;box-shadow:0 0 0 0.5px #a8a8a8,0 0.5px 1px rgba(0,0,0,0.2)"></div>
<div class="t" style="left:86px;top:151px;font-size:11.5px;color:#333;letter-spacing:0.2px">Constrain to margins</div>
<div class="a" style="left:6px;top:169px;width:254px;height:1px;background:#d2d2d2"></div>
<div class="a" style="left:10px;top:176px;width:12px;height:12px;border-radius:3px;background:#fff;box-shadow:0 0 0 0.5px #a8a8a8,0 0.5px 1px rgba(0,0,0,0.2)"></div><svg class="a" style="left:27px;top:173px;" width="15" height="15" viewBox="0 0 15 15"><rect x="0.5" y="0.5" width="14" height="14" rx="2.5" fill="#f6f6f6" stroke="#bdbdbd" stroke-width="0.8"/><rect x="2.5" y="2.5" width="10" height="10" fill="#fff" stroke="#1d7cf2" stroke-width="1.1"/><path d="M4.8 4.5v6M10.2 4.5v6M4.8 7.5h5.4" stroke="#1d7cf2" stroke-width="1"/></svg><div class="t" style="left:46px;top:175px;font-size:11.5px;color:#333">Width</div>
<div class="a" style="left:186px;top:173px;width:70px;height:19px;border:1px solid #b9b9b9;background:#ececec"><div class="t" style="left:4px;top:2px;font-size:12px;line-height:16px;color:#222">42</div><svg class="a" style="right:4px;top:6px" width="8" height="5"><path d="M0 0h8L4 5z" fill="#6a6a6a"/></svg></div>
<div class="a" style="left:10px;top:197px;width:12px;height:12px;border-radius:3px;background:#fff;box-shadow:0 0 0 0.5px #a8a8a8,0 0.5px 1px rgba(0,0,0,0.2)"></div><svg class="a" style="left:27px;top:194px;" width="15" height="15" viewBox="0 0 15 15"><rect x="0.5" y="0.5" width="14" height="14" rx="2.5" fill="#f6f6f6" stroke="#bdbdbd" stroke-width="0.8"/><rect x="2.5" y="2.5" width="10" height="10" fill="#fff" stroke="#1d7cf2" stroke-width="1.1"/><path d="M4.5 4.8h6M4.5 10.2h6M7.5 4.8v5.4" stroke="#1d7cf2" stroke-width="1"/></svg><div class="t" style="left:46px;top:196px;font-size:11.5px;color:#333">Height</div>
<div class="a" style="left:186px;top:194px;width:70px;height:19px;border:1px solid #b9b9b9;background:#ececec"><div class="t" style="left:4px;top:2px;font-size:12px;line-height:16px;color:#222">21</div><svg class="a" style="right:4px;top:6px" width="8" height="5"><path d="M0 0h8L4 5z" fill="#6a6a6a"/></svg></div>
<div class="a" style="left:6px;top:218px;width:254px;height:1px;background:#d2d2d2"></div>
<div class="a" style="left:10px;top:225px;width:12px;height:12px;border-radius:3px;background:#fff;box-shadow:0 0 0 0.5px #a8a8a8,0 0.5px 1px rgba(0,0,0,0.2);opacity:0.45"></div><svg class="a" style="left:27px;top:223px;opacity:0.45;" width="15" height="15" viewBox="0 0 15 15"><rect x="0.5" y="0.5" width="14" height="14" rx="2.5" fill="#f6f6f6" stroke="#bdbdbd" stroke-width="0.8"/><path d="M4.5 2.5h6v2h-6zM4.5 10.5h6v2h-6zM7.5 5v5M6 7.5h3" fill="none" stroke="#1d7cf2" stroke-width="0.9"/></svg><div class="t" style="left:46px;top:225px;font-size:11.5px;color:#b5b5b5">Equal Widths</div>
<div class="a" style="left:10px;top:246px;width:12px;height:12px;border-radius:3px;background:#fff;box-shadow:0 0 0 0.5px #a8a8a8,0 0.5px 1px rgba(0,0,0,0.2);opacity:0.45"></div><svg class="a" style="left:27px;top:244px;opacity:0.45;" width="15" height="15" viewBox="0 0 15 15"><rect x="0.5" y="0.5" width="14" height="14" rx="2.5" fill="#f6f6f6" stroke="#bdbdbd" stroke-width="0.8"/><path d="M2.5 4.5v6h2v-6zM10.5 4.5v6h2v-6zM6 6.5h3M6 8.5h3" fill="none" stroke="#1d7cf2" stroke-width="0.9"/></svg><div class="t" style="left:46px;top:246px;font-size:11.5px;color:#b5b5b5">Equal Heights</div>
<div class="a" style="left:10px;top:267px;width:12px;height:12px;border-radius:3px;background:#fff;box-shadow:0 0 0 0.5px #a8a8a8,0 0.5px 1px rgba(0,0,0,0.2)"></div><svg class="a" style="left:27px;top:265px;" width="15" height="15" viewBox="0 0 15 15"><rect x="0.5" y="0.5" width="14" height="14" rx="2.5" fill="#f6f6f6" stroke="#bdbdbd" stroke-width="0.8"/><rect x="2.5" y="2.5" width="10" height="10" fill="#fff" stroke="#1d7cf2" stroke-width="1.2"/><path d="M6.8 12.5V6.8h5.7" fill="none" stroke="#1d7cf2" stroke-width="1.2"/></svg><div class="t" style="left:46px;top:267px;font-size:11.5px;color:#333">Aspect Ratio</div>
<div class="a" style="left:6px;top:288px;width:254px;height:1px;background:#d2d2d2"></div>
<div class="a" style="left:10px;top:293px;width:246px;height:16px;border-radius:4px;border:1px solid #a5a5a5;background:linear-gradient(#f4f4f4,#ececec)"><div class="t" style="left:0;width:244px;text-align:center;top:0px;font-size:11.5px;color:#222;letter-spacing:0.15px">Add 4 Constraints</div></div>
</div>
</div>
</body></html>
